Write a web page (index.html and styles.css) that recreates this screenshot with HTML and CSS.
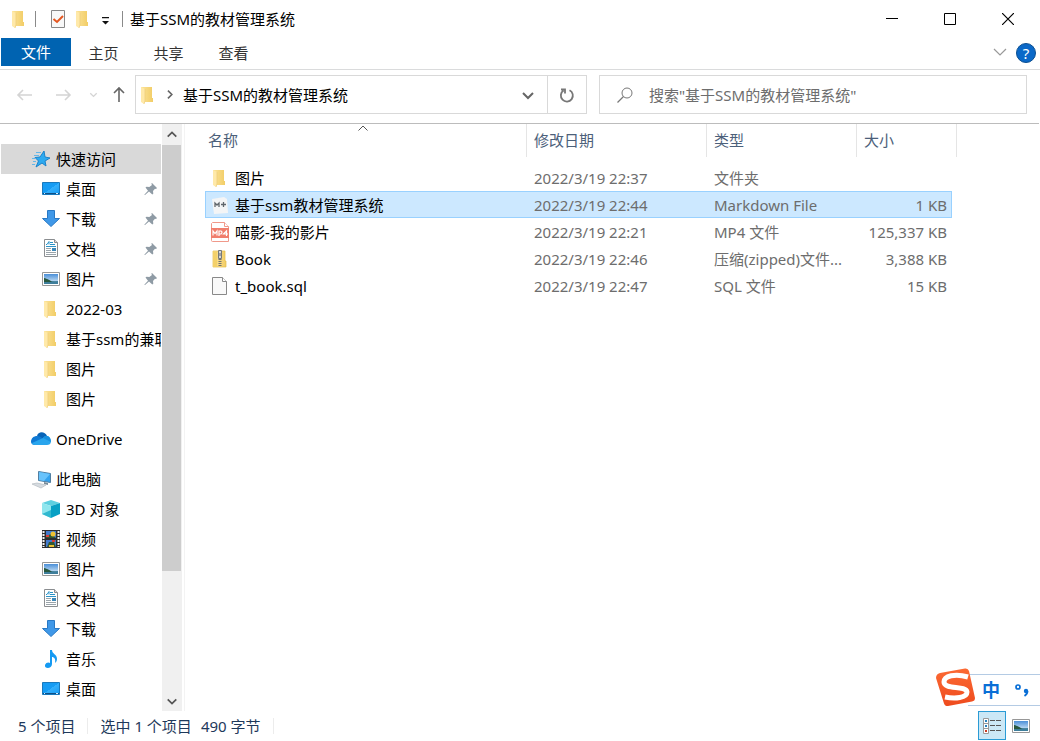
FILE: index.html
```html
<!DOCTYPE html>
<html lang="zh-CN">
<head>
<meta charset="utf-8">
<title>基于SSM的教材管理系统</title>
<link rel="stylesheet" href="styles.css">
</head>
<body>
<svg class="defs" aria-hidden="true">
  <defs>
    <linearGradient id="gold"><stop offset="0" stop-color="#fbe39a"/><stop offset="1" stop-color="#f2cd66"/></linearGradient>
    <linearGradient id="sky" x2="0" y2="1"><stop offset="0" stop-color="#4b8fd8"/><stop offset="1" stop-color="#e6f4fb"/></linearGradient>
    <linearGradient id="screen" y2="1"><stop offset="0" stop-color="#169cf4"/><stop offset=".5" stop-color="#169cf4"/><stop offset=".5" stop-color="#35b0fc"/><stop offset="1" stop-color="#169cf4"/></linearGradient>
    <linearGradient id="brand" x2="0" y2="1"><stop offset="0" stop-color="#fc6a34"/><stop offset="1" stop-color="#ee4b1e"/></linearGradient>
    <symbol id="folder" viewBox="0 0 20 20"><path d="M3 2h11v11h1v4H3z" fill="url(#gold)"/><path d="M3 2l4 2v12l-1 3-3-2z" fill="#ffe9a9"/><path d="M7 4v12l-1 3" fill="none" stroke="#edcb75" stroke-width=".7"/></symbol>
    <symbol id="desktop" viewBox="0 0 20 20"><path d="M1.500 3.500h17v12h-17z" fill="url(#screen)" stroke="#1979bd"/><path d="M2 14.500h16" stroke="#0d4f85"/><path d="M3 14.500h1m11 0h2" stroke="#d8efff"/></symbol>
    <symbol id="download" viewBox="0 0 20 20"><path d="M6.500 1.500h7v8h5L10 17.500 1.500 9.500h5z" fill="#3f98e8" stroke="#2878c4"/></symbol>
    <symbol id="document" viewBox="0 0 20 20"><path d="M3.500.500h10l3 3v14h-13z" fill="#fff" stroke="#8a8d90"/><path d="M13.500.500v3h3" fill="#ddd" stroke="#8a8d90"/><path d="M5 5.500h1l2-3v3M9 3.500h3M9 5.500h5M5 7.500h10" stroke="#2a93c8" fill="none"/><path d="M5 9.500h5m-5 2h5m-5 2h10m-10 2h10" stroke="#9aa4aa"/><path d="M11 9h4v3h-4z" fill="#3d88b8"/></symbol>
    <symbol id="picture" viewBox="0 0 20 20"><path d="M1.500 3.500h17v13h-17z" fill="#fff" stroke="#979797"/><path d="M3 5h14v10H3z" fill="url(#sky)"/><path d="M3 9l3 1 4 2 7 1v2H3z" fill="#39727c"/><path d="M3 13l14-1v3H3z" fill="#3e7e9b"/><path d="M3 9l5 2 3 2H3z" fill="#29583e"/></symbol>
    <symbol id="star" viewBox="0 0 20 20"><path d="M13 2l1 6 5 1-5 3 1 5-4-3-6 4 2.500-6L4 8.500l5-.5z" fill="#2eaaf0" stroke="#1b83ca"/><path d="M5 3.500h5M3 6.500h5M1 9.500h4M2 12.500h3M1 15.500h3" stroke="#64b7e9"/></symbol>
    <symbol id="pin" viewBox="0 0 14 14"><path d="M8 1l5 5-1 1-1-.300L9 9l.300 2.700-1 .800L5 9.500 1 13H.500v-.500L4 8.800 1.500 5.500l1-.800L5.300 5 8 3 7.300 1.800z" fill="#8f9ba5"/></symbol>
    <symbol id="cloud" viewBox="0 0 20 20"><path d="M6 7c1-5 8-5 10 0l-5 4z" fill="#0864b8"/><path d="M0 13c0-4 3-6 6-6 4 0 6 3 8 5l-8 4H4c-2 0-4-1-4-3z" fill="#0f79d4"/><path d="M12 9c3-4 8-1 8 3 0 3-2 4-4 4H4c-2 0-3-1-3-2z" fill="#29a5ed"/><path d="M12 9c2-3 5-3 7 0l1 4z" fill="#168fde"/></symbol>
    <symbol id="pc" viewBox="0 0 20 20"><path d="M7.500 2.500l12 2v9l-12-2z" fill="#34a2ee" stroke="#527fa1"/><path d="M8 3l11 2-6 7-5-1z" fill="#69c3fb"/><path d="M13 13v2l4 1v-2" fill="#788b99"/><path d="M1 15l5-1 9 2-5 3z" fill="#d6dbe0" stroke="#b4bbc2" stroke-width=".7"/></symbol>
    <symbol id="cube" viewBox="0 0 20 20"><path d="M1 4l9-3 9 3-9 3z" fill="#5ed0e0"/><path d="M1 4l9 3v12l-9-4z" fill="#8fe6ee"/><path d="M19 4l-9 3v12l9-4z" fill="#08a0c4"/><path d="M1 15l9-4v8z" fill="#30b8cf"/></symbol>
    <symbol id="film" viewBox="0 0 20 20"><path d="M1 1h18v18H1z" fill="#2c2d30"/><path d="M2.500 2v16M17.500 2v16" stroke="#f2f2f2" stroke-width="2" stroke-dasharray="2 1"/><path d="M5 2h10v7H5zM5 11h10v7H5z" fill="#427bce"/><path d="M5 7l5-2 5 4H5zM8 13h5l2 5H6z" fill="#325732"/><circle cx="12" cy="5" r="2.500" fill="#f0c232"/><path d="M5 6h3v2H5zM11 11h3v2h-3z" fill="#dc3d36"/><path d="M8 16h5v2H8z" fill="#ecc035"/></symbol>
    <symbol id="music" viewBox="0 0 20 20"><path d="M9 1h2c0 4 5 4 5 9 0 2-1 3-2 4 1-4-1-6-3-6v7c0 5-8 5-7 1 1-3 4-3 5-2z" fill="#159af2"/></symbol>
    <symbol id="markdown" viewBox="0 0 20 20"><path d="M2 4l12-2 3 2 1 14-14 1z" fill="#f4f5f6"/><path d="M5 12V8l2 2 2-2v4M13.500 7v5M11 9.500h5" fill="none" stroke="#60666b" stroke-width="1.300"/></symbol>
    <symbol id="mp4" viewBox="0 0 20 20"><path d="M2.500.500h12l4 4v15h-16q-1 0-1-1v-17z" fill="#fff" stroke="#f0998a"/><path d="M14.500.500v4h4" fill="#fff" stroke="#f0998a"/><path d="M1 6h18v10H1z" fill="#f07e6d"/><path d="M3 13.500V9l2 2.500L7 9v4.500M9 14V9h2q2 1 0 3H9M16.500 14V9L13.500 12h4.500" fill="none" stroke="#fff" stroke-width="1.200"/></symbol>
    <symbol id="zip" viewBox="0 0 20 20"><path d="M3 2h12v10h1v6H3z" fill="url(#gold)" stroke="#e5bd49" stroke-width=".7"/><path d="M3 2l4 1v15H3z" fill="#f4d16a"/><path d="M10 2v16" stroke="#6e7173" stroke-width="3" stroke-dasharray="1 1"/><path d="M8.500 1.500h3v8h-3z" fill="#d8d8d8" stroke="#74787b"/><path d="M10 4v3" stroke="#666"/></symbol>
    <symbol id="file" viewBox="0 0 20 20"><path d="M2.500 1.500h10l4 4v13h-14z" fill="#f9f9f9" stroke="#898989"/><path d="M12.500 1.500v4h4" fill="#fff" stroke="#898989"/></symbol>
    <symbol id="props" viewBox="0 0 20 20"><path d="M3.500 1.500h13v17h-13z" fill="#f8f8f8" stroke="#888"/><path d="M5.500 10l3.500 3 6-6" fill="none" stroke="#e45721" stroke-width="2"/></symbol>
    <symbol id="chev" viewBox="0 0 14 14"><path d="M2 5l5 5 5-5" fill="none" stroke="currentColor" stroke-width="2"/></symbol>
    <symbol id="chev-thin" viewBox="0 0 14 14"><path d="M1 4l6 6 6-6" fill="none" stroke="currentColor" stroke-width="1.200"/></symbol>
    <symbol id="arrow" viewBox="0 0 20 20"><path d="M17 10H3m5-5l-5 5 5 5" fill="none" stroke="currentColor" stroke-width="1.600"/></symbol>
  </defs>
</svg>
<div class="window">
  <header class="titlebar">
    <svg class="icon"><use href="#folder"/></svg>
    <span class="rule"></span>
    <button class="quick" aria-label="属性"><svg class="icon"><use href="#props"/></svg></button>
    <button class="quick" aria-label="新建文件夹"><svg class="icon"><use href="#folder"/></svg></button>
    <button class="quick more" aria-label="自定义快速访问工具栏"><svg width="7" height="8" viewBox="0 0 7 8"><path d="M0 0h7v1.300H0zM0 4h7L3.500 7.500z" fill="#111"/></svg></button>
    <span class="rule"></span>
    <h1>基于SSM的教材管理系统</h1>
    <div class="captions">
      <button aria-label="最小化"><svg width="12" height="12"><path d="M0 5.500h12" stroke="#000"/></svg></button>
      <button aria-label="最大化"><svg width="12" height="12"><path d="M.5.500h11v11H.5z" fill="none" stroke="#000"/></svg></button>
      <button aria-label="关闭"><svg width="12" height="12"><path d="M0 0l12 12M12 0L0 12" stroke="#000" stroke-width="1.200"/></svg></button>
    </div>
  </header>
  <div class="ribbon">
    <button class="tab active">文件</button>
    <button class="tab">主页</button>
    <button class="tab">共享</button>
    <button class="tab">查看</button>
    <button class="expand" aria-label="展开功能区"><svg width="14" height="14"><use href="#chev-thin"/></svg></button>
    <button class="help" aria-label="帮助">?</button>
  </div>
  <div class="navbar">
    <div class="history">
      <button aria-label="后退"><svg class="icon"><use href="#arrow"/></svg></button>
      <button aria-label="前进"><svg class="icon flip"><use href="#arrow"/></svg></button>
      <button class="recent" aria-label="最近位置"><svg width="9" height="9"><use href="#chev"/></svg></button>
      <button class="up" aria-label="上移"><svg class="icon turn"><use href="#arrow"/></svg></button>
    </div>
    <div class="address">
      <svg class="icon"><use href="#folder"/></svg>
      <svg class="crumb" width="11" height="11"><use href="#chev"/></svg>
      <span class="path">基于SSM的教材管理系统</span>
      <button aria-label="历史记录"><svg width="14" height="14"><use href="#chev"/></svg></button>
      <button class="refresh" aria-label="刷新"><svg width="16" height="16" viewBox="0 0 16 16"><path d="M10.500 3.200a6 6 0 1 1-6 .4M2 2.500h4v4" fill="none" stroke="#777" stroke-width="1.800"/></svg></button>
    </div>
    <label class="search">
      <svg width="16" height="16" viewBox="0 0 16 16"><circle cx="10" cy="6" r="5" fill="none" stroke="#777"/><path d="M6.500 9.500L.5 15.500" stroke="#777" stroke-width="1.200"/></svg>
      <input type="text" aria-label="搜索" placeholder='搜索"基于SSM的教材管理系统"'>
    </label>
  </div>
  <div class="body">
    <nav class="tree">
      <ul>
        <li class="root selected"><svg class="icon"><use href="#star"/></svg><span>快速访问</span></li>
        <li><svg class="icon"><use href="#desktop"/></svg><span>桌面</span><svg class="pin"><use href="#pin"/></svg></li>
        <li><svg class="icon"><use href="#download"/></svg><span>下载</span><svg class="pin"><use href="#pin"/></svg></li>
        <li><svg class="icon"><use href="#document"/></svg><span>文档</span><svg class="pin"><use href="#pin"/></svg></li>
        <li><svg class="icon"><use href="#picture"/></svg><span>图片</span><svg class="pin"><use href="#pin"/></svg></li>
        <li><svg class="icon"><use href="#folder"/></svg><span>2022-03</span></li>
        <li><svg class="icon"><use href="#folder"/></svg><span>基于ssm的兼职</span></li>
        <li><svg class="icon"><use href="#folder"/></svg><span>图片</span></li>
        <li><svg class="icon"><use href="#folder"/></svg><span>图片</span></li>
      </ul>
      <ul>
        <li class="root"><svg class="icon"><use href="#cloud"/></svg><span>OneDrive</span></li>
      </ul>
      <ul>
        <li class="root"><svg class="icon"><use href="#pc"/></svg><span>此电脑</span></li>
        <li><svg class="icon"><use href="#cube"/></svg><span>3D 对象</span></li>
        <li><svg class="icon"><use href="#film"/></svg><span>视频</span></li>
        <li><svg class="icon"><use href="#picture"/></svg><span>图片</span></li>
        <li><svg class="icon"><use href="#document"/></svg><span>文档</span></li>
        <li><svg class="icon"><use href="#download"/></svg><span>下载</span></li>
        <li><svg class="icon"><use href="#music"/></svg><span>音乐</span></li>
        <li><svg class="icon"><use href="#desktop"/></svg><span>桌面</span></li>
      </ul>
    </nav>
    <div class="scrollbar">
      <button aria-label="向上滚动"><svg class="over" width="12" height="12"><use href="#chev"/></svg></button>
      <div class="thumb"></div>
      <div class="track"></div>
      <button aria-label="向下滚动"><svg width="12" height="12"><use href="#chev"/></svg></button>
    </div>
    <main class="files">
      <table>
        <colgroup><col class="c-name"><col class="c-date"><col class="c-type"><col class="c-size"><col class="c-end"></colgroup>
        <thead>
          <tr>
            <th><div class="first">名称<svg class="sort" width="10" height="6" viewBox="0 0 10 6"><path d="M.5 5.500L5 1l4.500 4.500" fill="none" stroke="#555"/></svg></div></th>
            <th><div>修改日期</div></th>
            <th><div>类型</div></th>
            <th><div class="open">大小</div></th>
            <th><div></div></th>
          </tr>
        </thead>
        <tbody>
          <tr><td><div class="name"><svg class="icon"><use href="#folder"/></svg>图片</div></td><td>2022/3/19 22:37</td><td>文件夹</td><td></td><td></td></tr>
          <tr class="selected"><td><div class="name"><svg class="icon"><use href="#markdown"/></svg>基于ssm教材管理系统</div></td><td>2022/3/19 22:44</td><td>Markdown File</td><td>1 KB</td><td></td></tr>
          <tr><td><div class="name"><svg class="icon"><use href="#mp4"/></svg>喵影-我的影片</div></td><td>2022/3/19 22:21</td><td>MP4 文件</td><td>125,337 KB</td><td></td></tr>
          <tr><td><div class="name"><svg class="icon"><use href="#zip"/></svg>Book</div></td><td>2022/3/19 22:46</td><td>压缩(zipped)文件...</td><td>3,388 KB</td><td></td></tr>
          <tr><td><div class="name"><svg class="icon"><use href="#file"/></svg>t_book.sql</div></td><td>2022/3/19 22:47</td><td>SQL 文件</td><td>15 KB</td><td></td></tr>
        </tbody>
      </table>
    </main>
  </div>
  <footer class="status">
    <span>5 个项目</span>
    <span class="rule"></span>
    <span>选中 1 个项目</span>
    <span class="bytes">490 字节</span>
    <span class="rule"></span>
    <div class="views">
      <button class="on" aria-label="详细信息"><svg width="20" height="18" viewBox="0 0 20 18"><path d="M1.500 1.500h5v15h-5zM1.500 6.500h5M1.500 11.500h5" fill="#fff" stroke="#999"/><path d="M3 4h2" stroke="#2882bd" stroke-width="2"/><path d="M3 9h2" stroke="#2882bd" stroke-width="2"/><path d="M3 14h2" stroke="#cc3b22" stroke-width="2"/><path d="M8 3.500h5m1 0h5M8 8.500h5m1 0h5M8 13.500h5m1 0h5" stroke="#555"/></svg></button>
      <button aria-label="大图标"><svg class="icon"><use href="#picture"/></svg></button>
    </div>
  </footer>
</div>
<aside class="ime">
  <svg class="logo" width="40" height="38" viewBox="0 0 40 38"><path d="M4 5L29 .5q3-.500 4 2.500l6 27q0 3-3 3.500L12 38q-3 .500-4-2.500L0 10q0-4 4-5z" fill="url(#brand)"/><path d="M32 9C19 5 8 8 8 14c0 8 22 3 23 10 0 6-12 7-22 5" fill="none" stroke="#fff" stroke-width="5"/></svg>
  <button>中</button>
  <button aria-label="中文标点"><svg width="14" height="14" viewBox="0 0 14 14"><circle cx="3" cy="4" r="2" fill="none" stroke="#0a6fd6" stroke-width="1.700"/><circle cx="11" cy="8" r="2.200" fill="#0a6fd6"/><path d="M12.500 8q0 3-3 5" fill="none" stroke="#0a6fd6" stroke-width="1.800"/></svg></button>
</aside>
</body>
</html>
```
FILE: styles.css
```css
* { box-sizing: border-box; }
body {
  margin: 0;
  font: 15px/20px "Noto Sans", "Noto Sans CJK SC", sans-serif;
  color: #000;
  background: #fff;
}
button, input { font: inherit; color: inherit; }
button { display: flex; align-items: center; justify-content: center; padding: 0; border: 0; background: none; }
svg { display: block; flex: none; }
.defs { position: absolute; width: 0; height: 0; }
.icon { width: 20px; height: 20px; }
.window { display: flex; flex-direction: column; min-height: 100vh; }

.titlebar { display: flex; align-items: center; height: 38px; padding-left: 9px; }
.titlebar .rule { width: 1px; height: 16px; background: #8a8a8a; }
.titlebar .icon + .rule { margin: 0 12px 0 6px; }
.quick { margin-right: 5px; }
.more { width: 9px; margin: 4px 12px 0 3px; }
h1 { margin: 0 0 0 7px; font-size: 15px; font-weight: 400; }
.captions { display: flex; margin-left: auto; padding-right: 3px; }
.captions button { width: 58px; height: 38px; }

.ribbon { display: flex; height: 32px; padding: 0 3px 3px 1px; border-bottom: 1px solid #dadbdc; color: #333; }
.tab { width: 65px; height: 30px; }
.tab.active { width: 70px; height: 28px; color: #fff; background: #0063b1; }
.expand { margin-left: auto; padding: 0 9px; color: #999; }
.help { width: 20px; height: 20px; margin: 5px 1px 0 0; border: 1px solid #0b4f91; border-radius: 50%; color: #fff; background: #0a68c8; }

.navbar { display: flex; height: 54px; padding: 5px 12px 9px 15px; border-bottom: 1px solid #bcbcbc; margin-right: 1px; }
.history { display: flex; width: 120px; color: #d4d4d4; }
.history button { width: 20px; margin-right: 18px; }
.history .recent { width: 10px; margin: 0 11px 0 -3px; }
.history .up { margin: 0; color: #666; }
.flip { transform: scaleX(-1); }
.turn { transform: rotate(90deg); }
.address, .search { display: flex; align-items: center; height: 39px; border: 1px solid #d9d9d9; }
.address { flex: 1 1 452px; margin-right: 12px; padding-left: 2px; }
.crumb { margin: 0 8px 0 6px; color: #666; transform: rotate(-90deg); }
.path { flex: 1; }
.address button { width: 38px; height: 37px; color: #666; }
.address .refresh { width: 39px; border-left: 1px solid #d9d9d9; }
.search { flex: 1 1 428px; padding-left: 17px; }
.search input { flex: 1; min-width: 0; margin-left: 16px; padding: 0; border: 0; outline: 0; background: none; }
.search input::placeholder { color: #6d6d6d; opacity: 1; }

.body { display: flex; flex: 1; }
.tree { width: 162px; padding: 20px 1px 0; overflow: hidden; }
.tree ul { margin: 0 0 10px; padding: 0; list-style: none; }
.tree ul:last-child { margin: 0; }
.tree li { display: flex; align-items: center; height: 30px; padding-left: 40px; white-space: nowrap; overflow: hidden; }
.tree .root { padding-left: 30px; }
.tree .selected { background: #d9d9d9; }
.tree span { margin-left: 5px; }
.pin { width: 14px; height: 14px; margin: 0 3px 0 auto; }
.scrollbar { display: flex; flex-direction: column; width: 20px; background: #f0f0f0; color: #555; }
.scrollbar button { width: 19px; height: 21px; }
.over { transform: rotate(180deg); }
.thumb { flex: 426; margin-right: 1px; background: #cdcdcd; }
.track { flex: 119; }

.files { flex: 1; margin-left: 2px; border-left: 1px solid #f3f3f3; padding-left: 20px; }
table { width: 752px; table-layout: fixed; border-collapse: separate; border-spacing: 0; }
.c-name { width: 322px; }
.c-date { width: 180px; }
.c-type { width: 150px; }
.c-size { width: 95px; }
.c-end { width: 5px; }
th { height: 40px; padding: 0; font-weight: 400; text-align: left; vertical-align: top; color: #4c607a; }
th div { position: relative; height: 33px; padding-left: 7px; border-right: 1px solid #e5e5e5; line-height: 33px; }
th .first { padding-left: 3px; }
th .open { border-right: 0; }
th:last-child div { padding: 0; }
.sort { position: absolute; top: 1px; left: 50%; margin-left: -8px; }
td { height: 27px; padding: 0 0 0 7px; border: solid transparent; border-width: 1px 0; color: #6d6d6d; white-space: nowrap; }
td:nth-child(4) { padding: 0 5px 0 0; text-align: right; }
td:first-child { padding-left: 5px; color: #000; }
td:last-child { padding: 0; }
.name { display: flex; align-items: center; gap: 5px; }
.selected td:not(:last-child) { border-color: #99d1ff; background: #cce8ff; }
.selected td:first-child { padding-left: 4px; border-left-width: 1px; }
.selected td:nth-child(4) { padding-right: 4px; border-right-width: 1px; }

.status { display: flex; align-items: center; height: 30px; padding: 0 6px 1px 18px; color: #1e395b; }
.status .rule { width: 1px; height: 16px; margin: 0 12px; background: #ececec; }
.bytes { margin-left: 9px; }
.views { display: flex; align-items: center; gap: 1px; margin-left: auto; }
.views button { height: 29px; width: 27px; }
.views .on { width: 28px; border: 1px solid #2a9bd5; background: #cbe8f6; }

.ime { position: absolute; right: 0; bottom: 35px; display: flex; align-items: center; gap: 11px; width: 72px; height: 32px; padding-left: 13px; border: solid #b4cbe4; border-width: 1px 0; background: #fff; }
.ime button { width: 20px; color: #0a6fd6; font-size: 18px; font-weight: 700; }
.logo { position: absolute; left: -32px; bottom: -1px; }
```
